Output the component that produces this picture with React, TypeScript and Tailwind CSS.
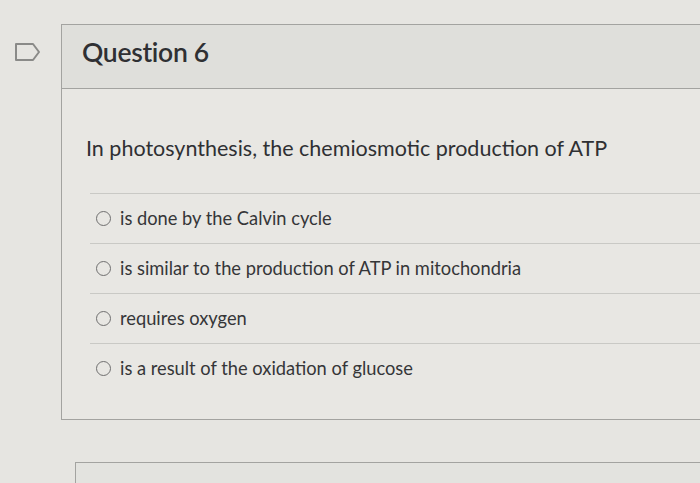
import React from "react";

const answers = [
  "is done by the Calvin cycle",
  "is similar to the production of ATP in mitochondria",
  "requires oxygen",
  "is a result of the oxidation of glucose",
];

export default function App() {
  return (
    <div
      className="w-[700px] h-[483px] overflow-hidden bg-[#e6e5e1] flex flex-col"
      style={{ fontFamily: "Lato, 'Open Sans', sans-serif" }}
    >
      <div className="flex pt-[24px]">
        <div className="w-[61px] shrink-0 flex justify-start pl-[14px] pt-[18px]">
          <svg width="28" height="20" viewBox="0 0 28 20">
            <path
              d="M2 2 H19 L25 10 L19 18 H2 Z"
              fill="none"
              stroke="#8a8a88"
              strokeWidth="2"
              strokeLinejoin="round"
            />
          </svg>
        </div>
        <div className="flex-1 border-l border-t border-b border-[#a3a3a0] bg-[#e8e7e3]">
          <div className="h-[64px] bg-[#dfdfdb] border-b border-[#a3a3a0] flex items-center pl-[20px] pb-[8px]">
            <span className="text-[26.5px] font-semibold text-[#2f3033] tracking-[-0.3px]">
              Question 6
            </span>
          </div>
          <div className="pl-[24px] pt-[45px] pb-[26px]">
            <div className="text-[21.5px] text-[#2f3033] leading-[28px] mb-[31px]">
              In photosynthesis, the chemiosmotic production of ATP
            </div>
            <div className="flex flex-col pl-[4px]">
              {answers.map((a, i) => (
                <div
                  key={i}
                  className="border-t border-[#c9c9c5] h-[50px] flex items-center pl-[6px] gap-[9px]"
                >
                  <span className="w-[15px] h-[15px] rounded-full border-[1.5px] border-[#6f6f6f] shrink-0" />
                  <span className="text-[18.3px] text-[#353638]">{a}</span>
                </div>
              ))}
            </div>
          </div>
        </div>
      </div>
      <div className="flex mt-[42px]">
        <div className="w-[75px] shrink-0" />
        <div className="flex-1 h-[30px] border-l border-t border-[#a3a3a0] bg-[#e3e3df]" />
      </div>
    </div>
  );
}
